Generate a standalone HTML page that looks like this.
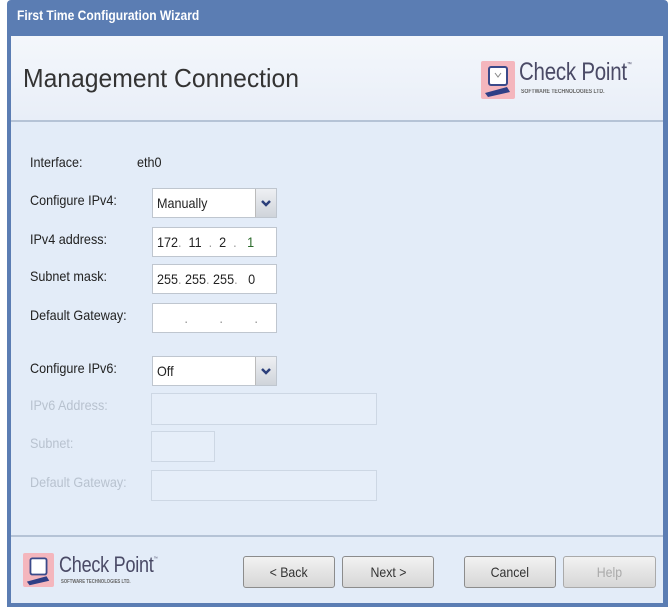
<!DOCTYPE html>
<html><head><meta charset="utf-8"><style>
*{margin:0;padding:0;box-sizing:border-box}
body{width:668px;height:607px;background:#fff;position:relative;overflow:hidden;font-family:"Liberation Sans",sans-serif;}
.win{position:absolute;left:7px;top:0;width:661px;height:607px;background:#5b7db3;border-radius:4px 4px 0 0}
.title{position:absolute;left:17px;top:7px;color:#fff;font-weight:bold;font-size:14px;white-space:nowrap;transform:scaleX(0.86);transform-origin:left}
.inner{position:absolute;left:11px;top:36px;width:652px;height:567px;background:#e3ecf8}
.hdr{position:absolute;left:0;top:0;width:652px;height:86px;background:linear-gradient(#f4f7fb,#e8eef8);border-bottom:2px solid #b5c3d6}
.h1{position:absolute;left:12px;top:27px;font-size:26px;color:#333;white-space:nowrap;transform:scaleX(0.95);transform-origin:left}
.lbl{position:absolute;left:19px;font-size:14px;color:#222;white-space:nowrap;transform:scaleX(0.9);transform-origin:left}
.dis{color:#b8c2cf}
.box{position:absolute;background:#fff;border:1px solid #bfc6cf;font-size:14px;color:#222;height:30px;line-height:28px;padding-left:4px;white-space:nowrap}
.box .t{display:inline-block;transform:scaleX(0.9);transform-origin:left}
.dbox{position:absolute;border:1px solid #cdd7e4;background:#e6eef9}
.arr{position:absolute;right:0;top:0;width:21px;height:28px;background:linear-gradient(#eef0f3,#cfd4da);border-left:1px solid #bbb}
.foot{position:absolute;left:0;top:499px;width:652px;height:68px;border-top:2px solid #b5c3d6;background:#e3ecf8}
.btn{position:absolute;top:19px;height:32px;border:1px solid #8c8c8c;border-radius:3px;background:linear-gradient(#f2f2f2,#d6d6d6);font-size:14px;color:#333;text-align:center;line-height:30px}
.btn span{display:inline-block;transform:scaleX(0.88)}
.logo{position:absolute}
.ic{position:absolute;background:#f4b6bd;border-radius:2px}
.cp{position:absolute;color:#4a4a66;white-space:nowrap;transform:scaleX(0.82);transform-origin:left;letter-spacing:-0.3px}
.sub{position:absolute;font-size:6px;font-weight:bold;color:#666;white-space:nowrap;transform:scaleX(0.85);transform-origin:left}
</style></head><body>
<div class="win"></div>
<div class="title">First Time Configuration Wizard</div>
<div class="inner">
 <div class="hdr">
  <div class="h1">Management Connection</div>
  <div class="logo" style="left:470px;top:21px;width:170px;height:50px">
   <div class="ic" style="left:0;top:4px;width:34px;height:38px">
    <svg width="34" height="38" viewBox="0 0 34 38"><rect x="8" y="6" width="18" height="18" rx="2" fill="#fff" stroke="#3a4a8a" stroke-width="2"/><path d="M14 12l3 4 3-4" stroke="#888" fill="none"/><path d="M4 32l22-6 3 5-22 5z" fill="#2e3f86"/></svg>
   </div>
   <div class="cp" style="left:38px;top:1px;font-size:25px">Check Point<sup style="font-size:6px;vertical-align:14px">™</sup></div>
   <div class="sub" style="left:40px;top:32px">SOFTWARE TECHNOLOGIES LTD.</div>
  </div>
 </div>
 <div class="lbl" style="top:118px">Interface:</div>
 <div class="lbl" style="left:126px;top:118px">eth0</div>
 <div class="lbl" style="top:156px">Configure IPv4:</div>
 <div class="box" style="left:141px;top:152px;width:125px"><span class="t">Manually</span><div class="arr"><svg width="20" height="28"><path d="M6 12l4 4 4-4" stroke="#2b3f7a" stroke-width="2.5" fill="none"/></svg></div></div>
 <div class="lbl" style="top:195px">IPv4 address:</div>
 <div class="box" style="left:141px;top:191px;width:125px"><span class="t">172<span style="color:#999">.</span>&nbsp; 11&nbsp; <span style="color:#999">.</span>&nbsp; 2&nbsp; <span style="color:#999">.</span>&nbsp;&nbsp; <span style="color:#2a6a2a">1</span></span></div>
 <div class="lbl" style="top:232px">Subnet mask:</div>
 <div class="box" style="left:141px;top:228px;width:125px"><span class="t">255<span style="color:#999">.</span>&nbsp;255<span style="color:#999">.</span>&nbsp;255<span style="color:#999">.</span>&nbsp;&nbsp; 0</span></div>
 <div class="lbl" style="top:271px">Default Gateway:</div>
 <div class="box" style="left:141px;top:267px;width:125px;color:#999">&nbsp;&nbsp;&nbsp;&nbsp;&nbsp;&nbsp; .&nbsp;&nbsp;&nbsp;&nbsp;&nbsp;&nbsp;&nbsp; .&nbsp;&nbsp;&nbsp;&nbsp;&nbsp;&nbsp;&nbsp; .</div>
 <div class="lbl" style="top:324px">Configure IPv6:</div>
 <div class="box" style="left:141px;top:320px;width:125px"><span class="t">Off</span><div class="arr"><svg width="20" height="28"><path d="M6 12l4 4 4-4" stroke="#2b3f7a" stroke-width="2.5" fill="none"/></svg></div></div>
 <div class="lbl dis" style="top:361px">IPv6 Address:</div>
 <div class="dbox" style="left:140px;top:357px;width:226px;height:32px"></div>
 <div class="lbl dis" style="top:399px">Subnet:</div>
 <div class="dbox" style="left:140px;top:395px;width:64px;height:31px"></div>
 <div class="lbl dis" style="top:438px">Default Gateway:</div>
 <div class="dbox" style="left:140px;top:434px;width:226px;height:31px"></div>
 <div class="foot">
  <div class="logo" style="left:12px;top:14px;width:150px;height:40px">
   <div class="ic" style="left:0;top:2px;width:31px;height:34px">
    <svg width="31" height="34" viewBox="0 0 34 38"><rect x="8" y="6" width="18" height="18" rx="2" fill="#fff" stroke="#3a4a8a" stroke-width="2"/><path d="M4 32l22-6 3 5-22 5z" fill="#2e3f86"/></svg>
   </div>
   <div class="cp" style="left:36px;top:1px;font-size:22px">Check Point<sup style="font-size:5px;vertical-align:12px">™</sup></div>
   <div class="sub" style="left:38px;top:28px;font-size:5px">SOFTWARE TECHNOLOGIES LTD.</div>
  </div>
  <div class="btn" style="left:232px;width:92px"><span>&lt; Back</span></div>
  <div class="btn" style="left:331px;width:92px"><span>Next &gt;</span></div>
  <div class="btn" style="left:453px;width:92px"><span>Cancel</span></div>
  <div class="btn" style="left:552px;width:93px;color:#aaa;border-color:#aaa"><span>Help</span></div>
 </div>
</div>
</body></html>
